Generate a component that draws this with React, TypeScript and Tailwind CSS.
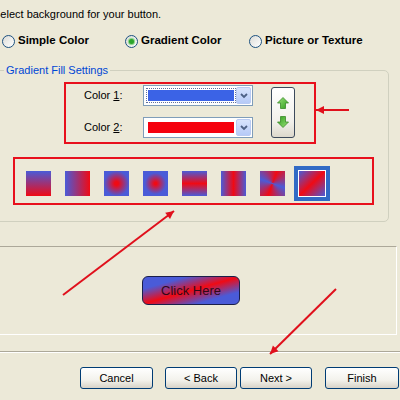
import React from "react";

const FONT = "font-['Liberation_Sans',Arial,sans-serif]";

function Radio({ checked = false }: { checked?: boolean }) {
  return (
    <span className="w-[13px] h-[13px] rounded-full border border-[#1C5180] bg-[linear-gradient(135deg,#DCDCD7,#FFFFFF)] flex items-center justify-center shrink-0">
      {checked && <span className="w-[5px] h-[5px] rounded-full bg-[#2CA52C] shadow-[0_0_1px_1px_#7FD07F]" />}
    </span>
  );
}

function Combo({ swatch, focus = false }: { swatch: string; focus?: boolean }) {
  return (
    <div className="w-[110px] h-[21px] border border-[#7F9DB9] bg-white flex items-center">
      <div className={`ml-[2px] w-[90px] h-[15px] p-[1px] ${focus ? "border border-dotted border-[#6070A0]" : "border border-white"}`}>
        <div className={`w-full h-full ${swatch}`} />
      </div>
      <div className="ml-auto mr-[1px] w-[15px] h-[17px] rounded-[2px] bg-[linear-gradient(to_bottom,#D8E4FC,#B6CAF7)] border border-[#B9CBF3] flex items-center justify-center">
        <svg width="8" height="6" viewBox="0 0 8 6">
          <path d="M1 1 L4 4 L7 1" fill="none" stroke="#4D6185" strokeWidth="1.8" />
        </svg>
      </div>
    </div>
  );
}

function GreenArrow({ up }: { up?: boolean }) {
  return (
    <svg width="12" height="12" viewBox="0 0 12 12" className={up ? "" : "rotate-180"}>
      <defs>
        <linearGradient id={up ? "gu" : "gd"} x1="0" y1="0" x2="1" y2="1">
          <stop offset="0" stopColor="#9BE27A" />
          <stop offset="1" stopColor="#2F9E1E" />
        </linearGradient>
      </defs>
      <path d="M6 0.5 L11.5 6 L8.5 6 L8.5 11.5 L3.5 11.5 L3.5 6 L0.5 6 Z" fill={`url(#${up ? "gu" : "gd"})`} stroke="#3A8A2A" strokeWidth="0.8" />
    </svg>
  );
}

function XPButton({ label, w }: { label: string; w: string }) {
  return (
    <button className={`${w} h-[22px] rounded-[3px] border border-[#003C74] bg-[linear-gradient(to_bottom,#FFFFFF,#F3F2EC_60%,#D8D3C8)] text-[11px] text-black flex items-center justify-center`}>
      {label}
    </button>
  );
}

const swatches = [
  "bg-[linear-gradient(to_bottom,#4A5BD8,#F00A14)]",
  "bg-[linear-gradient(to_right,#4A5BD8,#F00A14)]",
  "bg-[radial-gradient(circle_closest-side,#F00A14_15%,#4A5BD8)]",
  "bg-[radial-gradient(closest-side,#F00A14_10%,#4A5BD8_85%)]",
  "bg-[linear-gradient(to_bottom,#4A5BD8,#F00A14_50%,#4A5BD8)]",
  "bg-[linear-gradient(to_right,#4A5BD8,#F00A14_50%,#4A5BD8)]",
  "bg-[conic-gradient(from_20deg,#F00A14,#4A5BD8,#F00A14,#4A5BD8,#F00A14)]",
];

function arrowHead(x1: number, y1: number, x2: number, y2: number) {
  const a = Math.atan2(y2 - y1, x2 - x1);
  const len = 8;
  const wd = 4;
  const bx = x2 - len * Math.cos(a);
  const by = y2 - len * Math.sin(a);
  const px = -Math.sin(a) * wd;
  const py = Math.cos(a) * wd;
  return `${x2},${y2} ${bx + px},${by + py} ${bx - px},${by - py}`;
}

const arrows = [
  [349, 110, 316, 110],
  [63, 295, 174, 211],
  [336, 289, 270, 354],
];

export default function App() {
  return (
    <div className={`relative w-[400px] h-[400px] overflow-hidden bg-[#ECE9D8] text-[11px] text-black ${FONT}`}>
      <p className="mt-[7px] -ml-[7px] leading-[14px] whitespace-nowrap">Select background for your button.</p>

      {/* radio row */}
      <div className="mt-[13px] h-[14px] flex items-center font-bold text-[11.5px]">
        <label className="w-[123px] ml-[2px] flex items-center gap-[3px]">
          <Radio /> Simple Color
        </label>
        <label className="w-[124px] flex items-center gap-[3px]">
          <Radio checked /> Gradient Color
        </label>
        <label className="flex items-center gap-[3px]">
          <Radio /> Picture or Texture
        </label>
      </div>

      {/* group box */}
      <div className="relative mt-[22px] -ml-[5px] w-[394px] h-[152px] border border-[#D0D0BF] rounded-[5px]">
        <span className="absolute -top-[8px] left-[8px] px-[2px] bg-[#ECE9D8] text-[#0046D5] leading-[14px]">
          Gradient Fill Settings
        </span>

        <div className="mt-[11px] ml-[68px] w-[252px] h-[62px] border-2 border-[#E8101C] flex pt-[1px] pl-[18px]">
          <div className="flex flex-col gap-[11px]">
            <div className="flex items-center">
              <span className="w-[59px]">Color <span className="underline">1</span>:</span>
              <Combo swatch="bg-[#3B63E6]" focus />
            </div>
            <div className="flex items-center">
              <span className="w-[59px]">Color <span className="underline">2</span>:</span>
              <Combo swatch="bg-[#F5000D]" />
            </div>
          </div>
          <div className="ml-[18px] mt-[2px] w-[24px] h-[51px] rounded-[3px] border border-[#3C4A5C] bg-[linear-gradient(to_bottom,#FFFFFF,#F1F0EA_70%,#DCD8CC)] flex flex-col items-center justify-center gap-[7px]">
            <GreenArrow up />
            <GreenArrow />
          </div>
        </div>

        <div className="mt-[13px] ml-[17px] w-[361px] h-[48px] border-2 border-[#E8101C] pt-[5px] pl-[11px] flex items-center">
          <div className="flex items-center gap-[14px]">
            {swatches.map((s, i) => (
              <div key={i} className={`w-[25px] h-[25px] ${s}`} />
            ))}
          </div>
          <div className="ml-[9px] w-[36px] h-[35px] border-[4px] border-[#316AC5] bg-white p-[1px]">
            <div className="w-full h-full bg-[linear-gradient(to_bottom_right,#4A5BD8,#F00A14_50%,#4A5BD8)]" />
          </div>
        </div>
      </div>

      {/* preview panel */}
      <div className="mt-[24px] w-[397px] h-[89px] border-t border-t-[#ACA899] border-b border-b-white border-r border-r-white">
        <div className="mt-[29px] ml-[142px] w-[98px] h-[29px] rounded-[6px] border border-[#1A1F4A] bg-[linear-gradient(to_bottom_right,#4A5BD8_22%,#F00A14_50%,#4A5BD8_78%)] flex items-center justify-center text-[13px] text-[#300818]">
          Click Here
        </div>
      </div>

      <div className="mt-[16px] w-full border-t border-t-[#ACA899] border-b border-b-white" />

      {/* wizard buttons */}
      <div className="mt-[14px] ml-[80px] flex">
        <XPButton label="Cancel" w="w-[73px]" />
        <div className="ml-[12px]"><XPButton label="< Back" w="w-[72px]" /></div>
        <div className="ml-[3px]"><XPButton label="Next >" w="w-[72px]" /></div>
        <div className="ml-[13px]"><XPButton label="Finish" w="w-[74px]" /></div>
      </div>

      {/* annotation arrows */}
      <svg className="absolute inset-0 pointer-events-none" width="400" height="400" viewBox="0 0 400 400">
        {arrows.map(([x1, y1, x2, y2], i) => (
          <g key={i}>
            <line x1={x1} y1={y1} x2={x2} y2={y2} stroke="#E0101C" strokeWidth="2" />
            <polygon points={arrowHead(x1, y1, x2, y2)} fill="#E0101C" />
          </g>
        ))}
      </svg>
    </div>
  );
}
